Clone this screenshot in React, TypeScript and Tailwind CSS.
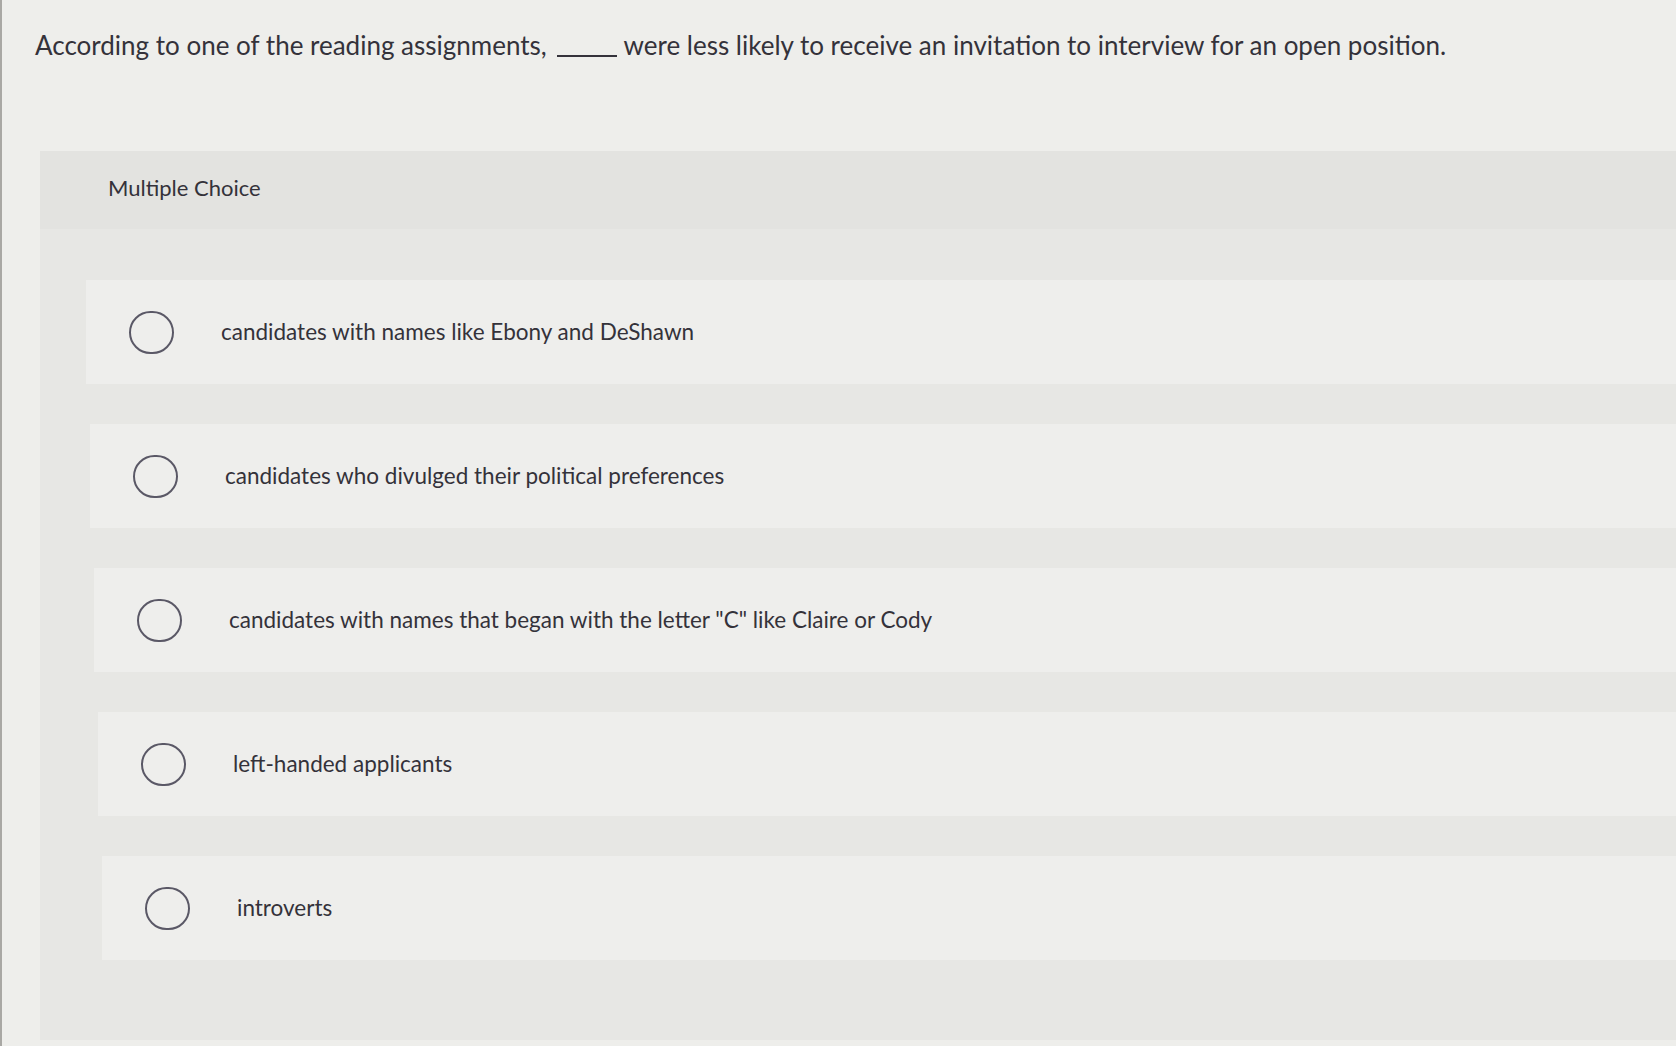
const options = [
  { text: 'candidates with names like Ebony and DeShawn', shift: 'ml-[46px]' },
  { text: 'candidates who divulged their political preferences', shift: 'ml-[50px]' },
  { text: 'candidates with names that began with the letter "C" like Claire or Cody', shift: 'ml-[54px]' },
  { text: 'left-handed applicants', shift: 'ml-[58px]' },
  { text: 'introverts', shift: 'ml-[62px]' },
];

function Radio() {
  return <span className="block h-[43px] w-[45px] shrink-0 rounded-full border-[2px] border-[#5a5866]" />;
}

export default function App() {
  return (
    <div
      className="relative h-[1046px] w-[1676px] overflow-hidden border-l-[2px] border-[#a9a8a4] bg-[#eeeeeb] text-[#34323a]"
      style={{ fontFamily: 'Lato, "Open Sans", sans-serif' }}
    >
      <p className="pl-[33px] pt-[29px] text-[26px] leading-[32px]">
        According to one of the reading assignments,{' '}
        <span className="ml-[4px] inline-block w-[60px] border-b-[2px] border-[#34323a] align-[-2px]" />{' '}
        were less likely to receive an invitation to interview for an open position.
      </p>

      <div className="ml-[38px] mt-[90px]">
        <div className="flex h-[78px] items-center bg-[#e3e3e0] pb-[6px] pl-[68px] text-[22px]">Multiple Choice</div>
        <div className="flex flex-col gap-[40px] bg-[#e7e7e4] pb-[80px] pt-[51px]">
          {options.map((o) => (
            <div key={o.text} className={`${o.shift} flex h-[104px] items-center bg-[#eeeeec] pl-[43px]`}>
              <Radio />
              <span className="ml-[47px] text-[22.5px]">{o.text}</span>
            </div>
          ))}
        </div>
      </div>
    </div>
  );
}
